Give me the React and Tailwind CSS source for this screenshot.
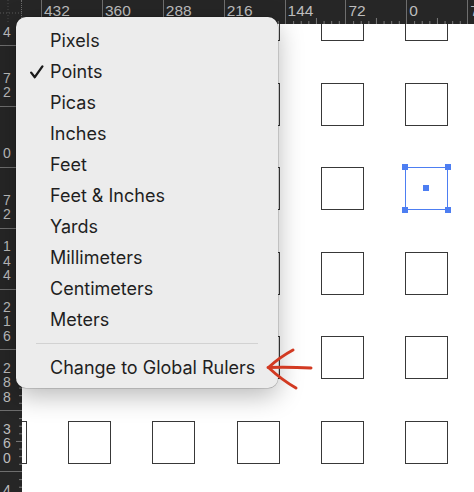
import React from "react";

const topLabels = ["", "432", "360", "288", "216", "144", "72", "0", "72", "144"];
const leftLabels = ["144", "72", "0", "72", "144", "216", "288", "360", "432"];
const menuItems = [
  "Pixels",
  "Points",
  "Picas",
  "Inches",
  "Feet",
  "Feet & Inches",
  "Yards",
  "Millimeters",
  "Centimeters",
  "Meters",
];

function TopTicks() {
  const ticks = [];
  for (let i = 1; i < 8; i++) {
    const x = (i * 60.9) / 8;
    const h = i === 4 ? 6 : 3;
    ticks.push(<line key={i} x1={x} x2={x} y1={6 - h} y2={6} stroke="#7a7a7a" strokeWidth="1" />);
  }
  return (
    <svg width="60.9" height="6" className="block">
      {ticks}
    </svg>
  );
}

function LeftTicks() {
  const ticks = [];
  for (let i = 1; i < 8; i++) {
    const y = (i * 60.9) / 8;
    const w = i === 4 ? 6 : 3;
    ticks.push(<line key={i} x1={6 - w} x2={6} y1={y} y2={y} stroke="#7a7a7a" strokeWidth="1" />);
  }
  return (
    <svg width="6" height="60.9" className="block shrink-0">
      {ticks}
    </svg>
  );
}

function Square({ selected }) {
  if (selected) {
    return (
      <div className="relative h-[43px] w-[43px] border-[1.5px] border-[#4d7ef2]">
        <span className="absolute left-[-4px] top-[-4px] h-[6px] w-[6px] bg-[#4d7ef2]" />
        <span className="absolute right-[-4px] top-[-4px] h-[6px] w-[6px] bg-[#4d7ef2]" />
        <span className="absolute bottom-[-4px] left-[-4px] h-[6px] w-[6px] bg-[#4d7ef2]" />
        <span className="absolute bottom-[-4px] right-[-4px] h-[6px] w-[6px] bg-[#4d7ef2]" />
        <span className="absolute left-[17px] top-[17px] h-[6px] w-[6px] bg-[#4d7ef2]" />
      </div>
    );
  }
  return <div className="h-[43px] w-[43px] border-[1.5px] border-[#383838]" />;
}

export default function App() {
  const squares = [];
  for (let r = 0; r < 6; r++) {
    for (let c = 0; c < 6; c++) {
      squares.push(<Square key={`${r}-${c}`} selected={r === 2 && c === 5} />);
    }
  }

  return (
    <div
      className="relative flex h-[492px] w-[474px] flex-col overflow-hidden bg-white"
      style={{ fontFamily: '"Liberation Sans", Arial, sans-serif' }}
    >
      {/* Top ruler row */}
      <div className="flex h-[24px] shrink-0 bg-[#262626]">
        <div className="h-[24px] w-[22px] shrink-0 border-r border-dotted border-[#6a6a6a]">
          <svg width="22" height="24" className="block">
            <line x1="0" x2="22" y1="13" y2="13" stroke="#5a5a5a" strokeDasharray="1 2" />
            <line x1="8" x2="8" y1="0" y2="24" stroke="#4a4a4a" strokeDasharray="1 2" />
          </svg>
        </div>
        <div className="flex-1 overflow-hidden">
          <div className="ml-[-41.9px] flex">
            {topLabels.map((l, i) => (
              <div
                key={i}
                className="flex h-[24px] w-[60.9px] shrink-0 flex-col border-l border-[#6e6e6e]"
              >
                <span className="h-[18px] pl-[2px] pt-[4px] text-[15.5px] leading-[14px] text-[#bdbdbd]">
                  {l}
                </span>
                <TopTicks />
              </div>
            ))}
          </div>
        </div>
      </div>

      {/* Body row */}
      <div className="flex min-h-0 flex-1">
        <div className="w-[22px] shrink-0 overflow-hidden bg-[#262626]">
          <div className="mt-[-39.9px] flex flex-col">
            {leftLabels.map((l, i) => (
              <div
                key={i}
                className="flex h-[60.9px] shrink-0 border-t border-[#6e6e6e]"
              >
                <div className="flex flex-1 flex-col justify-end pb-[6px] pl-[3px]">
                  {l.split("").map((d, j) => (
                    <span key={j} className="text-[14px] leading-[14.5px] text-[#bdbdbd]">
                      {d}
                    </span>
                  ))}
                </div>
                <LeftTicks />
              </div>
            ))}
          </div>
        </div>
        <div className="min-w-0 flex-1 overflow-hidden bg-white">
          <div className="ml-[-38px] mt-[-26px] grid w-max grid-cols-[repeat(6,43px)] gap-x-[41.2px] gap-y-[41.6px]">
            {squares}
          </div>
        </div>
      </div>

      {/* Dropdown menu */}
      <div
        className="absolute left-[16px] top-[17px] w-[262px] rounded-[10px] bg-[#ececec] pb-[5.5px] pt-[8px] shadow-[0_8px_26px_rgba(0,0,0,0.28),0_0_0_0.5px_rgba(0,0,0,0.25)]"
        style={{ fontFamily: 'Inter, "Noto Sans", sans-serif' }}
      >
        {menuItems.map((m) => (
          <div
            key={m}
            className="relative h-[31px] pl-[34px] text-[18px] leading-[31px] text-[#1f1f1f]"
          >
            {m === "Points" && (
              <svg
                width="14"
                height="14"
                viewBox="0 0 14 14"
                className="absolute left-[14px] top-[9px]"
              >
                <path
                  d="M1.2 7.6 L4.8 12.2 L12.4 1.4"
                  fill="none"
                  stroke="#1a1a1a"
                  strokeWidth="2.3"
                  strokeLinecap="round"
                  strokeLinejoin="round"
                />
              </svg>
            )}
            {m}
          </div>
        ))}
        <div className="flex h-[16.6px] items-center px-[20px]">
          <div className="h-px w-full bg-[#d2d2d2]" />
        </div>
        <div className="h-[31px] pl-[34px] text-[18px] leading-[31px] text-[#1f1f1f]">
          Change to Global Rulers
        </div>
      </div>

      {/* Red hand-drawn arrow */}
      <svg
        className="pointer-events-none absolute left-0 top-0"
        width="474"
        height="492"
        viewBox="0 0 474 492"
      >
        <path
          d="M268 367.5 Q290 367 311 368"
          fill="none"
          stroke="#d23a22"
          strokeWidth="3"
          strokeLinecap="round"
        />
        <path
          d="M269 367 Q280 357 293 350"
          fill="none"
          stroke="#d23a22"
          strokeWidth="3"
          strokeLinecap="round"
        />
        <path
          d="M269 368 Q282 380 296 388"
          fill="none"
          stroke="#d23a22"
          strokeWidth="3"
          strokeLinecap="round"
        />
      </svg>
    </div>
  );
}
